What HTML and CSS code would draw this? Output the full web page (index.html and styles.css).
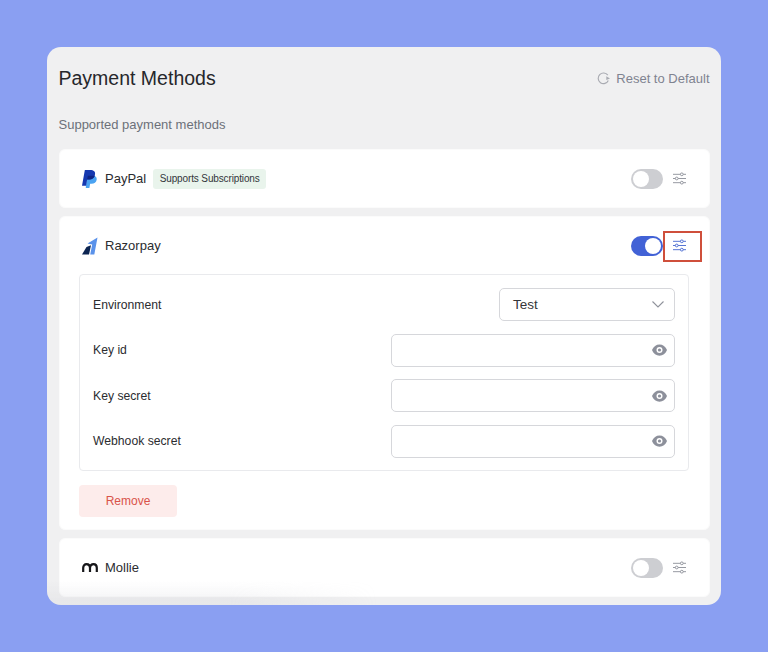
FILE: index.html
```html
<!DOCTYPE html>
<html lang="en">
<head>
    <meta charset="UTF-8">
    <meta name="viewport" content="width=device-width, initial-scale=1.0">
    <title>Payment Methods</title>
    <link rel="stylesheet" href="styles.css">
</head>
<body>
    <div class="panel">
        <div class="panel-head">
            <h1 class="title">Payment Methods</h1>
            <div class="reset">
                <svg class="reset-icon" viewBox="0 0 13 13" width="13" height="13">
                    <path d="M10.800 3.200A5.300 5.300 0 1 0 11.300 8.500" fill="none" stroke="#a9abb2" stroke-width="1.200"/>
                    <path d="M9.300 4.300 13 6.500 9.300 8z" fill="#a9abb2"/>
                </svg>
                Reset to Default
            </div>
        </div>
        <div class="subtitle">Supported payment methods</div>

        <div class="card">
            <div class="row">
                <svg class="logo" viewBox="0 0 16 19" width="18" height="18" preserveAspectRatio="xMinYMid">
                    <path d="M5 6h6c3 0 5 1.500 4.500 4.300C15 13 13 14.500 10 14.500H8.600L7.800 19H4z" fill="#4aa3f2"/>
                    <path d="M3 0h5.500c4 0 5.800 1.700 5.200 4.700C13.100 8.500 10.500 10 7.500 10H5.400L4.300 16.500H0z" fill="#1638b0"/>
                    <path d="M5.400 10 6.200 6H11c1.300 0 2.200.3 2.800-.5C13 8.500 10.500 10 7.500 10z" fill="#0f2585"/>
                </svg>
                <span class="name">PayPal</span>
                <span class="badge">Supports Subscriptions</span>
                <div class="actions">
                    <div class="toggle"><i></i></div>
                    <svg class="sliders" viewBox="0 0 14 14" width="13" height="13">
                        <path d="M0 2.500h14M0 7h14M0 11.500h14" stroke="#8f929b" stroke-width="1"/>
                        <circle cx="9.500" cy="2.500" r="1.500" fill="#fff" stroke="#8f929b"/>
                        <circle cx="4" cy="7" r="1.500" fill="#fff" stroke="#8f929b"/>
                        <circle cx="9.500" cy="11.500" r="1.500" fill="#fff" stroke="#8f929b"/>
                    </svg>
                </div>
            </div>
        </div>

        <div class="card card-open">
            <div class="row">
                <svg class="logo" viewBox="0 0 16 18" width="18" height="18" preserveAspectRatio="xMinYMid">
                    <path d="M5.500 6.500 15.500.5 12.300 17.500H8.200L10.200 7.500z" fill="#5a92ea"/>
                    <path d="M4.500 10 9 8.200 7 17.500H0z" fill="#0c2451"/>
                </svg>
                <span class="name">Razorpay</span>
                <div class="actions">
                    <div class="toggle on"><i></i></div>
                    <svg class="sliders" viewBox="0 0 14 14" width="13" height="13">
                        <path d="M0 2.500h14M0 7h14M0 11.500h14" stroke="#4a6ad0" stroke-width="1"/>
                        <circle cx="9.500" cy="2.500" r="1.500" fill="#fff" stroke="#4a6ad0"/>
                        <circle cx="4" cy="7" r="1.500" fill="#fff" stroke="#4a6ad0"/>
                        <circle cx="9.500" cy="11.500" r="1.500" fill="#fff" stroke="#4a6ad0"/>
                    </svg>
                    <div class="highlight"></div>
                </div>
            </div>
            <div class="settings">
                <div class="field">
                    <span class="label">Environment</span>
                    <div class="select">
                        Test
                        <svg viewBox="0 0 12 7" width="12" height="7">
                            <path d="M.5.5 6 6 11.500.5" fill="none" stroke="#8f929b" stroke-width="1.100"/>
                        </svg>
                    </div>
                </div>
                <div class="field">
                    <span class="label">Key id</span>
                    <div class="input">
                        <svg class="eye" viewBox="0 0 16 12" width="15" height="12">
                            <path d="M0 6C1.500 2 4.500 0 8 0S14.500 2 16 6c-1.500 4-4.500 6-8 6S1.500 10 0 6z" fill="#8d909b"/>
                            <circle cx="8" cy="6" r="3.200" fill="#fff"/>
                            <circle cx="8" cy="6" r="1.700" fill="#8d909b"/>
                        </svg>
                    </div>
                </div>
                <div class="field">
                    <span class="label">Key secret</span>
                    <div class="input">
                        <svg class="eye" viewBox="0 0 16 12" width="15" height="12">
                            <path d="M0 6C1.500 2 4.500 0 8 0S14.500 2 16 6c-1.500 4-4.500 6-8 6S1.500 10 0 6z" fill="#8d909b"/>
                            <circle cx="8" cy="6" r="3.200" fill="#fff"/>
                            <circle cx="8" cy="6" r="1.700" fill="#8d909b"/>
                        </svg>
                    </div>
                </div>
                <div class="field">
                    <span class="label">Webhook secret</span>
                    <div class="input">
                        <svg class="eye" viewBox="0 0 16 12" width="15" height="12">
                            <path d="M0 6C1.500 2 4.500 0 8 0S14.500 2 16 6c-1.500 4-4.500 6-8 6S1.500 10 0 6z" fill="#8d909b"/>
                            <circle cx="8" cy="6" r="3.200" fill="#fff"/>
                            <circle cx="8" cy="6" r="1.700" fill="#8d909b"/>
                        </svg>
                    </div>
                </div>
            </div>
            <div class="remove">Remove</div>
        </div>

        <div class="card">
            <div class="row">
                <svg class="logo" viewBox="0 0 16 9" width="18" height="9" preserveAspectRatio="xMinYMid">
                    <path d="M1.200 9V4.800C1.200 2.500 2.500 1.200 4.500 1.200 6.500 1.200 8 2.500 8 4.800V9M8 4.800C8 2.500 9.500 1.200 11.500 1.200 13.500 1.200 14.800 2.500 14.800 4.800V9" fill="none" stroke="#17171a" stroke-width="2.200"/>
                </svg>
                <span class="name">Mollie</span>
                <div class="actions">
                    <div class="toggle"><i></i></div>
                    <svg class="sliders" viewBox="0 0 14 14" width="13" height="13">
                        <path d="M0 2.500h14M0 7h14M0 11.500h14" stroke="#8f929b" stroke-width="1"/>
                        <circle cx="9.500" cy="2.500" r="1.500" fill="#fff" stroke="#8f929b"/>
                        <circle cx="4" cy="7" r="1.500" fill="#fff" stroke="#8f929b"/>
                        <circle cx="9.500" cy="11.500" r="1.500" fill="#fff" stroke="#8f929b"/>
                    </svg>
                </div>
            </div>
        </div>
        <div class="bottom-shade"></div>
    </div>
</body>
</html>
```

FILE: styles.css
```css
*{
    margin: 0;
    padding: 0;
    box-sizing: border-box;
}
body{
    height: 652px;
    padding: 47px;
    background-color: #8a9ff2;
    font-family: "Liberation Sans", Arial, sans-serif;
    color: #2b2c30;
    overflow: hidden;
}
.panel{
    width: 674px;
    height: 558px;
    padding: 0 11.500px;
    background-color: #f0f0f1;
    border-radius: 14px;
    position: relative;
}
.panel-head{
    height: 63px;
    display: flex;
    align-items: center;
    justify-content: space-between;
}
.title{
    font-size: 19.500px;
    font-weight: 400;
    color: #26272b;
}
.reset{
    display: flex;
    align-items: center;
    gap: 6px;
    font-size: 13px;
    color: #7f8390;
}
.subtitle{
    height: 39px;
    padding-top: 7px;
    font-size: 13px;
    color: #6c7079;
}
.card{
    background-color: #fff;
    border-radius: 6px;
    margin-bottom: 8px;
    border: 1px solid #fbfbfb;
}
.card-open{
    padding-bottom: 12px;
}
.row{
    height: 57px;
    padding: 0 7px 0 22px;
    display: flex;
    align-items: center;
}
.logo{
    flex: none;
}
.name{
    margin-left: 5.500px;
    font-size: 13px;
    color: #2b2c30;
}
.badge{
    margin-left: 7px;
    padding: 0 6.500px;
    height: 20px;
    line-height: 20px;
    font-size: 10px;
    letter-spacing: -.13px;
    color: #33363b;
    background-color: #e9f4ec;
    border-radius: 3px;
}
.actions{
    margin-left: auto;
    display: flex;
    align-items: center;
    gap: 10px;
    position: relative;
    padding-right: 16px;
}
.toggle{
    width: 32px;
    height: 20px;
    border-radius: 10px;
    background-color: #cdced2;
    padding: 2px;
}
.toggle i{
    display: block;
    width: 16px;
    height: 16px;
    border-radius: 50%;
    background-color: #fff;
}
.toggle.on{
    background-color: #4262d6;
    display: flex;
    justify-content: flex-end;
}
.highlight{
    position: absolute;
    top: -5px;
    right: 0;
    width: 39px;
    height: 31px;
    border: 2px solid #cf4f3b;
}
.settings{
    margin: 0 19.500px;
    padding: 13px;
    height: 197px;
    border: 1px solid #e9eaed;
    border-radius: 4px;
    display: flex;
    flex-direction: column;
    gap: 12.500px;
}
.field{
    height: 33px;
    display: flex;
    align-items: center;
    justify-content: space-between;
}
.label{
    font-size: 12.200px;
    color: #2b2c30;
}
.select, .input{
    height: 33px;
    border: 1px solid #d6d7db;
    border-radius: 5px;
    display: flex;
    align-items: center;
    justify-content: space-between;
}
.select{
    width: 176px;
    padding: 0 10px 0 13px;
    font-size: 13.500px;
    color: #35363a;
}
.input{
    width: 284px;
    padding-right: 7.500px;
    justify-content: flex-end;
}
.remove{
    width: 98px;
    height: 32px;
    margin: 14px 0 0 19.500px;
    line-height: 32px;
    text-align: center;
    font-size: 12px;
    color: #d9534a;
    background-color: #fdeceb;
    border-radius: 4px;
}
.bottom-shade{
    position: absolute;
    left: 0;
    bottom: 0;
    width: 330px;
    height: 24px;
    border-radius: 0 0 0 14px;
    background: linear-gradient(to top, rgba(195, 196, 205, .22), rgba(195, 196, 205, 0));
    -webkit-mask-image: linear-gradient(to right, #000 55%, transparent);
    mask-image: linear-gradient(to right, #000 55%, transparent);
}
```
